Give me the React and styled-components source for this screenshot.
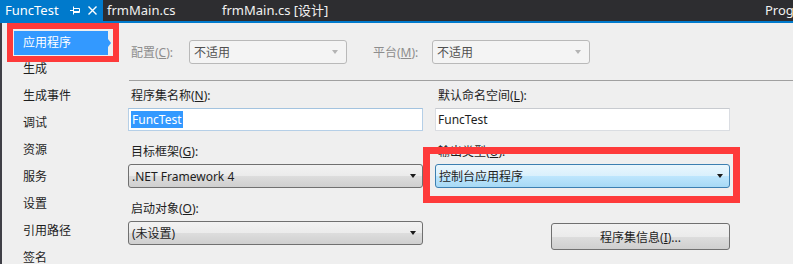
import React from 'react';
import styled, { createGlobalStyle } from 'styled-components';

const GlobalStyle = createGlobalStyle`
  html, body {
    margin: 0;
    padding: 0;
    background: #efefef;
  }
  body {
    font-family: "Noto Sans", "Noto Sans CJK SC", sans-serif;
    font-size: 12px;
    color: #1e1e1e;
  }
`;

const navItems = ['生成', '生成事件', '调试', '资源', '服务', '设置', '引用路径', '签名'];

const PinIcon = () => (
  <svg width="10" height="9" viewBox="0 0 10 9" fill="none" stroke="#fff" strokeWidth="1">
    <path d="M0 4.5H3.5" />
    <path d="M3.5 0.5V8.5" />
    <path d="M3.5 2.5H9.5V6.5H3.5" />
    <path d="M3.5 5.5H9.5" />
  </svg>
);

const CloseIcon = () => (
  <svg width="9" height="9" viewBox="0 0 9 9" stroke="#fff" strokeWidth="1.4">
    <path d="M0.5 0.5L8.5 8.5M8.5 0.5L0.5 8.5" />
  </svg>
);

class App extends React.Component {
  render() {
    return (
      <Page>
        <GlobalStyle />
        <TabBar>
          <ActiveTab>
            <span>FuncTest</span>
            <TabIcons>
              <PinIcon />
              <CloseIcon />
            </TabIcons>
          </ActiveTab>
          <Tab width={115}>frmMain.cs</Tab>
          <Tab width={543}>frmMain.cs [设计]</Tab>
          <Tab width={120}>Program.cs</Tab>
        </TabBar>

        <Body>
          <Sidebar>
            <SelectedItem>
              应用程序
              <Annotation $top={-8} $left={-7} $right={-11} $bottom={-7} $thick={6} />
            </SelectedItem>
            {navItems.map((item) => (
              <NavItem key={item}>{item}</NavItem>
            ))}
          </Sidebar>

          <Main>
            <TopRow>
              <DisabledLabel width={61}>配置(<u>C</u>):</DisabledLabel>
              <DisabledCombo>
                不适用
                <Arrow $muted />
              </DisabledCombo>
              <DisabledLabel width={62} $gap={23}>平台(<u>M</u>):</DisabledLabel>
              <DisabledCombo>
                不适用
                <Arrow $muted />
              </DisabledCombo>
            </TopRow>

            <Separator />

            <FormGrid>
              <Field>
                <Label>程序集名称(<u>N</u>):</Label>
                <TextBox $focused>
                  <Selection>FuncTest</Selection>
                </TextBox>
              </Field>
              <Field>
                <Label>默认命名空间(<u>L</u>):</Label>
                <TextBox>FuncTest</TextBox>
              </Field>

              <Field>
                <Label>目标框架(<u>G</u>):</Label>
                <Combo>
                  .NET Framework 4
                  <Arrow />
                </Combo>
              </Field>
              <Field>
                <Label>输出类型(<u>U</u>):</Label>
                <Combo $hot>
                  控制台应用程序
                  <Arrow />
                </Combo>
                <Annotation $top={3} $left={-12} $right={-10} $bottom={-15} $thick={7} />
              </Field>

              <Field>
                <Label>启动对象(<u>O</u>):</Label>
                <Combo>
                  (未设置)
                  <Arrow />
                </Combo>
              </Field>
              <ButtonCell>
                <Button>程序集信息(<u>I</u>)...</Button>
              </ButtonCell>
            </FormGrid>
          </Main>
        </Body>
      </Page>
    );
  }
}

const Page = styled.div`
  width: 793px;
  height: 264px;
  overflow: hidden;
  background: #efefef;
`;

const TabBar = styled.div`
  display: flex;
  height: 21px;
  background: #2d2d30;
  border-bottom: 2px solid #007acc;
  overflow: hidden;
  font-size: 13px;
  line-height: 21px;
  color: #f1f1f1;
`;

const ActiveTab = styled.div`
  display: flex;
  align-items: center;
  flex-shrink: 0;
  width: 103px;
  box-sizing: border-box;
  padding-left: 5px;
  background: #007acc;
  color: #fff;
`;

const TabIcons = styled.div`
  display: flex;
  align-items: center;
  gap: 8px;
  margin-left: 11px;
`;

const Tab = styled.div`
  flex-shrink: 0;
  width: ${(p) => p.width}px;
  box-sizing: border-box;
  padding-left: 4px;
  white-space: nowrap;
`;

const Body = styled.div`
  display: flex;
  height: 241px;
`;

const Sidebar = styled.nav`
  width: 120px;
  flex-shrink: 0;
  box-sizing: border-box;
  padding: 8px 0 0 12px;
  border-left: 2px solid #3f3f46;
  display: flex;
  flex-direction: column;
`;

const SelectedItem = styled.div`
  position: relative;
  width: 94px;
  height: 24px;
  box-sizing: border-box;
  padding-left: 9px;
  line-height: 24px;
  background: #3399ff;
  color: #fff;

  &::after {
    content: '';
    position: absolute;
    right: -3px;
    top: 8px;
    border-left: 3px solid #3399ff;
    border-top: 4px solid transparent;
    border-bottom: 4px solid transparent;
  }
`;

const NavItem = styled.div`
  height: 27px;
  line-height: 27px;
  padding-left: 9px;
  white-space: nowrap;
`;

const Annotation = styled.div`
  position: absolute;
  top: ${(p) => p.$top}px;
  left: ${(p) => p.$left}px;
  right: ${(p) => p.$right}px;
  bottom: ${(p) => p.$bottom}px;
  border: ${(p) => p.$thick}px solid #fe3a3a;
  pointer-events: none;
`;

const Main = styled.div`
  flex: 1;
  padding-left: 8px;
  display: flex;
  flex-direction: column;
`;

const TopRow = styled.div`
  display: flex;
  align-items: center;
  padding-top: 17px;
`;

const DisabledLabel = styled.span`
  width: ${(p) => p.width}px;
  margin-left: ${(p) => p.$gap || 0}px;
  box-sizing: border-box;
  padding-left: 3px;
  color: #8d8d8d;
`;

const DisabledCombo = styled.div`
  display: flex;
  align-items: center;
  justify-content: space-between;
  width: 158px;
  height: 24px;
  box-sizing: border-box;
  padding: 0 8px 0 4px;
  border: 1px solid #b9b9b9;
  border-radius: 3px;
  background: #f4f4f4;
  color: #505050;
`;

const Arrow = styled.span`
  width: 0;
  height: 0;
  border-left: 3.5px solid transparent;
  border-right: 3.5px solid transparent;
  border-top: 4px solid ${(p) => (p.$muted ? '#b4b4b4' : '#1a1a1a')};
`;

const Separator = styled.div`
  height: 1px;
  margin: 16px 0 0 1px;
  background: #a0a0a0;
`;

const FormGrid = styled.div`
  display: grid;
  grid-template-columns: 295px 295px;
  column-gap: 12px;
  row-gap: 13px;
  padding-top: 7px;
`;

const Field = styled.div`
  position: relative;
  display: flex;
  flex-direction: column;
  gap: 4px;
`;

const Label = styled.div`
  height: 16px;
  line-height: 16px;
  padding-left: 3px;
  white-space: nowrap;
`;

const TextBox = styled.div`
  display: flex;
  align-items: center;
  height: 23px;
  box-sizing: border-box;
  padding-left: 2px;
  background: #fff;
  border: 1px solid ${(p) => (p.$focused ? '#b5cfe7' : '#dadde2')};
  border-top-color: ${(p) => (p.$focused ? '#a3c3df' : '#c8cbd0')};
`;

const Selection = styled.span`
  background: #3399ff;
  color: #fff;
  line-height: 17px;
  padding: 0 1px;
`;

const Combo = styled.div`
  display: flex;
  align-items: center;
  justify-content: space-between;
  height: 24px;
  box-sizing: border-box;
  padding: 0 6px 0 3px;
  border: 1px solid ${(p) => (p.$hot ? '#3c7fb1' : '#707070')};
  border-radius: 3px;
  background: ${(p) =>
    p.$hot
      ? 'linear-gradient(#eaf6fd 0%, #d9f0fc 50%, #bee6fd 50%, #a7d9f5 100%)'
      : 'linear-gradient(#f2f2f2 0%, #ebebeb 50%, #dddddd 50%, #cfcfcf 100%)'};
  color: #1e1e1e;
`;

const ButtonCell = styled.div`
  display: flex;
  justify-content: flex-end;
  padding-top: 22px;
`;

const Button = styled.button`
  width: 179px;
  height: 27px;
  border: 1px solid #707070;
  border-radius: 3px;
  background: linear-gradient(#f2f2f2 0%, #ebebeb 50%, #dddddd 50%, #cfcfcf 100%);
  font: inherit;
  color: #1e1e1e;
  padding: 0;
`;

export default App;
